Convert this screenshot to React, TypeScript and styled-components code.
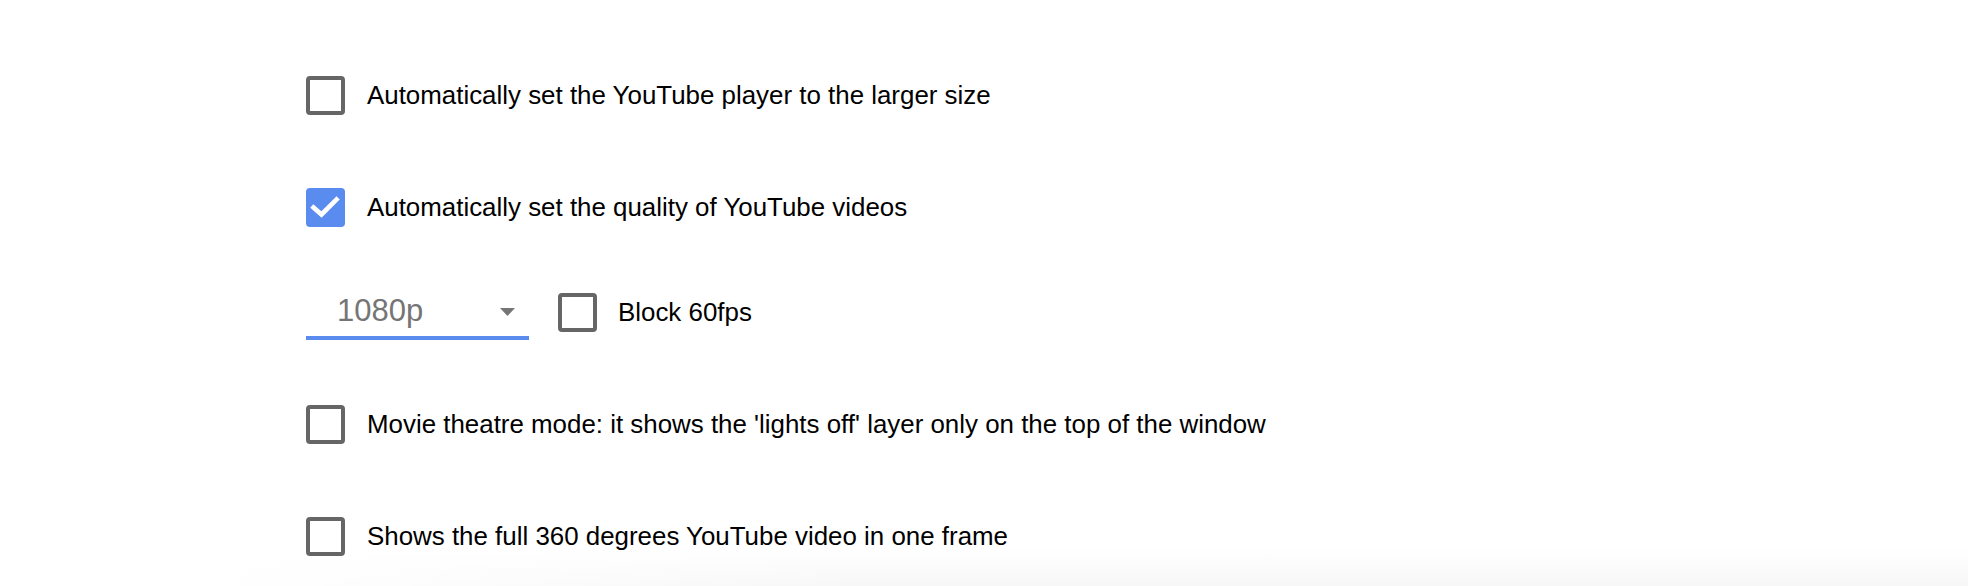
import React, { useState } from 'react'
import styled, { createGlobalStyle } from 'styled-components'

const GlobalStyle = createGlobalStyle`
  html, body {
    margin: 0;
    padding: 0;
    background: #fff;
  }
  body {
    font-family: "Liberation Sans", Arial, sans-serif;
    color: #000;
  }
`

const BLUE = '#5a8bef'
const GRAY = '#666666'

type Option = { key: string; label: string; checked: boolean }

const initial: Option[] = [
  { key: 'larger', label: 'Automatically set the YouTube player to the larger size', checked: false },
  { key: 'quality', label: 'Automatically set the quality of YouTube videos', checked: true },
  { key: 'theatre', label: "Movie theatre mode: it shows the 'lights off' layer only on the top of the window", checked: false },
  { key: 'full360', label: 'Shows the full 360 degrees YouTube video in one frame', checked: false },
]

const Checkbox = ({ checked, onToggle }: { checked: boolean; onToggle: () => void }) => (
  <Box $checked={checked} onClick={onToggle} role="checkbox" aria-checked={checked}>
    {checked && (
      <svg width="39" height="39" viewBox="0 0 39 39">
        <polyline
          points="7.5,19.5 15.5,26.5 30.5,11.5"
          fill="none"
          stroke="#fff"
          strokeWidth="4.6"
          strokeLinecap="square"
        />
      </svg>
    )}
  </Box>
)

export default function App() {
  const [options, setOptions] = useState(initial)
  const [block60, setBlock60] = useState(false)

  const toggle = (key: string) =>
    setOptions(prev => prev.map(o => (o.key === key ? { ...o, checked: !o.checked } : o)))

  const [larger, quality, ...rest] = options

  const renderRow = (o: Option) => (
    <Row key={o.key}>
      <Checkbox checked={o.checked} onToggle={() => toggle(o.key)} />
      <Label onClick={() => toggle(o.key)}>{o.label}</Label>
    </Row>
  )

  return (
    <>
      <GlobalStyle />
      <Page>
        <List>
          {renderRow(larger)}
          {renderRow(quality)}
          <SubRow>
            <Select>
              <SelectValue>1080p</SelectValue>
              <svg width="15" height="8" viewBox="0 0 15 8">
                <polygon points="0,0 15,0 7.5,8" fill="#757575" />
              </svg>
            </Select>
            <Checkbox checked={block60} onToggle={() => setBlock60(v => !v)} />
            <Label onClick={() => setBlock60(v => !v)}>Block 60fps</Label>
          </SubRow>
          {rest.map(renderRow)}
        </List>
      </Page>
    </>
  )
}

const Page = styled.div`
  box-sizing: border-box;
  height: 586px;
  padding: 76px 0 0 306px;
  overflow: hidden;
  background:
    linear-gradient(to right, #fff 10%, rgba(255, 255, 255, 0) 45%),
    linear-gradient(to bottom, #fff 548px, #f7f7f7 586px);
`

const List = styled.div`
  display: flex;
  flex-direction: column;
`

const Row = styled.div`
  display: flex;
  align-items: center;
  height: 39px;
  gap: 22px;
  margin-top: 73px;
  &:first-child {
    margin-top: 0;
  }
`

const SubRow = styled(Row)`
  margin-top: 66px;
  gap: 0;
  & > label {
    margin-left: 21px;
  }
`

const Box = styled.span<{ $checked: boolean }>`
  box-sizing: border-box;
  flex: none;
  width: 39px;
  height: 39px;
  border-radius: 4px;
  border: ${p => (p.$checked ? 'none' : `4px solid ${GRAY}`)};
  background: ${p => (p.$checked ? BLUE : '#fff')};
  display: flex;
  align-items: center;
  justify-content: center;
  cursor: pointer;
`

const Label = styled.label`
  font-size: 25.9px;
  line-height: 1;
  white-space: nowrap;
  cursor: pointer;
`

const Select = styled.div`
  box-sizing: border-box;
  flex: none;
  width: 223px;
  height: 54px;
  margin-right: 29px;
  padding: 0 14px 0 31px;
  display: flex;
  align-items: center;
  justify-content: space-between;
  border-bottom: 4px solid ${BLUE};
  cursor: pointer;
  svg {
    margin-top: 2px;
  }
`

const SelectValue = styled.span`
  font-size: 31px;
  color: #757575;
`
